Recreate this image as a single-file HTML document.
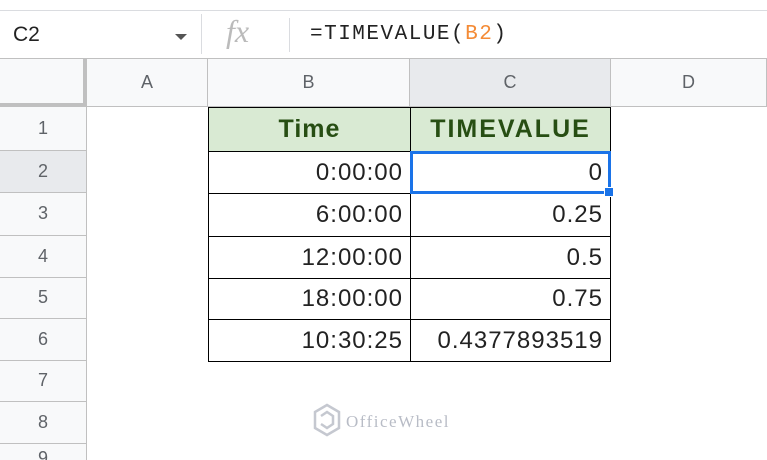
<!DOCTYPE html>
<html><head><meta charset="utf-8"><style>
*{margin:0;padding:0;box-sizing:border-box}
html,body{width:767px;height:460px;overflow:hidden}
body{background:#fff;font-family:"Liberation Sans",Arial,sans-serif;position:relative}
.a{position:absolute}
.rh{position:absolute;left:0;width:87px;background:#f8f9fa;border-bottom:1px solid #c0c0c0;border-right:1px solid #c0c0c0;color:#5f6368;font-size:18px;text-align:center}
.ch{position:absolute;top:59px;height:48px;background:#f8f9fa;border-right:1px solid #c0c0c0;border-bottom:1px solid #c0c0c0;color:#5f6368;font-size:18px;text-align:center;line-height:46px}
.c{position:absolute;border:1px solid #000;font-size:24px;letter-spacing:1px;color:#222;text-align:right;padding-right:7px;white-space:nowrap}
.h{background:#d9ead3;color:#274e13;font-weight:bold;text-align:center;padding:0;font-size:25px}
</style></head><body>
<div class="a" style="left:0;top:10px;width:767px;height:1px;background:#dadce0"></div>
<div class="a" style="left:0;top:11px;width:767px;height:48px;background:#fff;border-bottom:1px solid #c0c0c0"></div>
<div class="a" style="left:13px;top:23px;font-size:21px;color:#222">C2</div>
<div class="a" style="left:175px;top:34px;width:0;height:0;border-left:6px solid transparent;border-right:6px solid transparent;border-top:6px solid #555"></div>
<div class="a" style="left:201px;top:14px;width:1px;height:40px;background:#dadce0"></div>
<div class="a" style="left:226px;top:13px;font-family:'Liberation Serif',serif;font-style:italic;font-size:32px;color:#bbb">fx</div>
<div class="a" style="left:289px;top:18px;width:1px;height:34px;background:#dadce0"></div>
<div class="a" style="left:310px;top:23px;font-family:'Liberation Mono',monospace;font-size:21px;color:#222;letter-spacing:1.5px">=TIMEVALUE(<span style="color:#f48b36">B2</span>)</div>
<div class="a" style="left:0;top:59px;width:87px;height:48px;background:#f8f9fa;border-right:4px solid #c0c0c0;border-bottom:4px solid #c0c0c0"></div>
<div class="ch" style="left:87px;width:121px">A</div>
<div class="ch" style="left:208px;width:202px">B</div>
<div class="ch" style="left:410px;width:201px;background:#e8eaed">C</div>
<div class="ch" style="left:611px;width:156px">D</div>
<div class="rh" style="top:107px;height:44px;line-height:42px">1</div>
<div class="rh" style="top:151px;height:42px;line-height:40px;background:#e8eaed">2</div>
<div class="rh" style="top:193px;height:43px;line-height:41px">3</div>
<div class="rh" style="top:236px;height:42px;line-height:40px">4</div>
<div class="rh" style="top:278px;height:41px;line-height:39px">5</div>
<div class="rh" style="top:319px;height:42px;line-height:40px">6</div>
<div class="rh" style="top:361px;height:41px;line-height:39px">7</div>
<div class="rh" style="top:402px;height:42px;line-height:40px">8</div>
<div class="rh" style="top:444px;height:30px;line-height:28px">9</div>

<div class="c h" style="left:208px;top:107px;width:203px;height:45px;line-height:43px">Time</div>
<div class="c h" style="left:410px;top:107px;width:201px;height:45px;line-height:43px;letter-spacing:2px">TIMEVALUE</div>
<div class="c" style="left:208px;top:151px;width:203px;height:43px;line-height:41px">0:00:00</div>
<div class="c" style="left:410px;top:151px;width:201px;height:43px;line-height:41px">0</div>
<div class="c" style="left:208px;top:193px;width:203px;height:44px;line-height:42px">6:00:00</div>
<div class="c" style="left:410px;top:193px;width:201px;height:44px;line-height:42px">0.25</div>
<div class="c" style="left:208px;top:236px;width:203px;height:43px;line-height:41px">12:00:00</div>
<div class="c" style="left:410px;top:236px;width:201px;height:43px;line-height:41px">0.5</div>
<div class="c" style="left:208px;top:278px;width:203px;height:42px;line-height:40px">18:00:00</div>
<div class="c" style="left:410px;top:278px;width:201px;height:42px;line-height:40px">0.75</div>
<div class="c" style="left:208px;top:319px;width:203px;height:43px;line-height:41px">10:30:25</div>
<div class="c" style="left:410px;top:319px;width:201px;height:43px;line-height:41px">0.4377893519</div>

<div class="a" style="left:410px;top:151px;width:201px;height:43px;border:3px solid #1a73e8"></div>
<div class="a" style="left:604px;top:187px;width:10px;height:10px;background:#1a73e8;border:1px solid #fff"></div>

<svg class="a" style="left:312px;top:402px" width="30" height="36" viewBox="0 0 30 36"><path d="M15 3 L27 10 L27 26 L15 33 L3 26 L3 10 Z" fill="none" stroke="#c5c8d0" stroke-width="2.5"/><path d="M9 14 L15 10 L21 14 L21 22 L15 26 L9 22" fill="none" stroke="#c5c8d0" stroke-width="2.5"/></svg>
<div class="a" style="left:346px;top:412px;font-family:'Liberation Serif',serif;font-size:17px;color:#b8bcc6;letter-spacing:1.5px">OfficeWheel</div>
</body></html>
